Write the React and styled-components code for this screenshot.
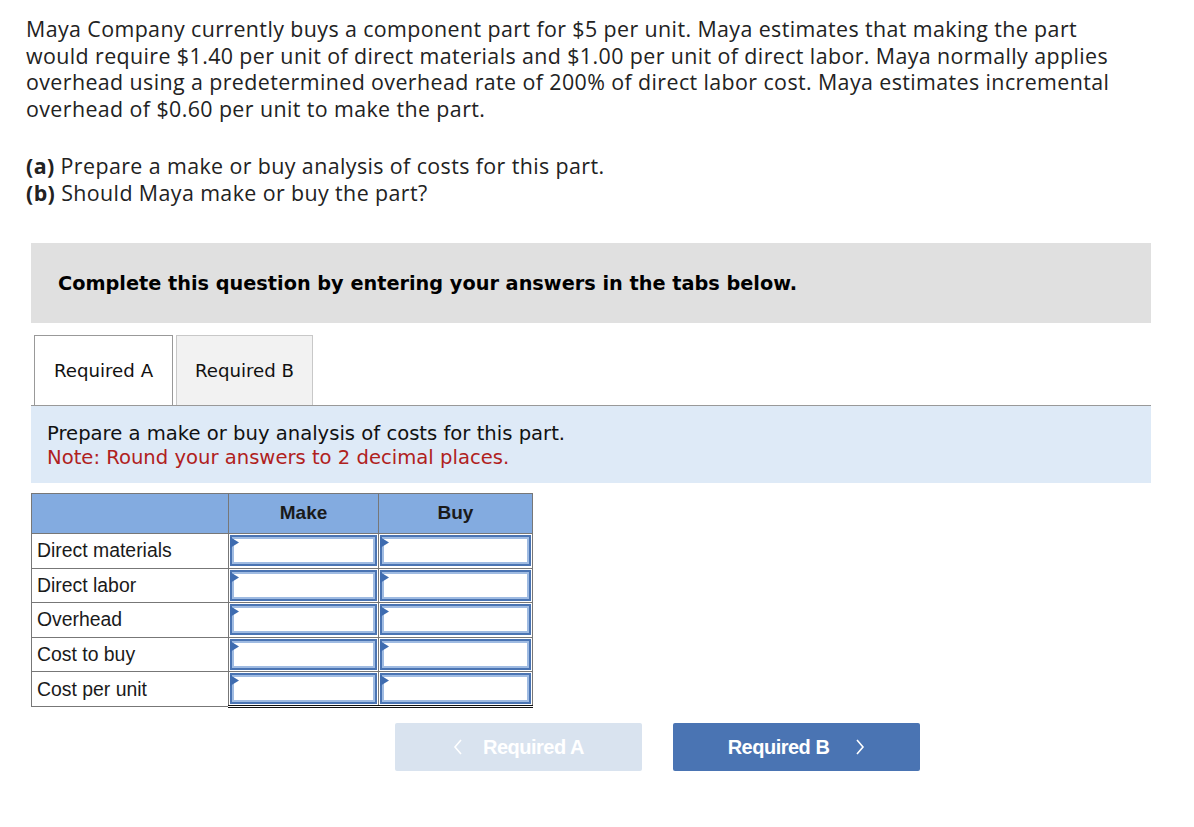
import React from 'react';
import styled, { createGlobalStyle } from 'styled-components';

const GlobalStyle = createGlobalStyle`
  body {
    margin: 0;
    background: #fff;
    color: #222;
  }
`;

const Page = styled.div`
  padding: 16px 43px 40px 26px;
  width: 1194px;
  box-sizing: border-box;
`;

const Problem = styled.p`
  font-family: "Open Sans", sans-serif;
  font-size: 21.4px;
  letter-spacing: 0.4px;
  line-height: 26.5px;
  margin: 0 0 31px;
  color: #222;
  white-space: nowrap;
`;

const Parts = styled(Problem)`
  margin: 0 0 37px;
  b { font-weight: 700; }
`;

const Panel = styled.div`
  margin-left: 5px;
  width: 1120px;
`;

const Instruction = styled.div`
  background: #e0e0e0;
  height: 80px;
  display: flex;
  align-items: center;
  padding-left: 27px;
  font-family: "DejaVu Sans", Verdana, sans-serif;
  font-weight: 700;
  font-size: 19.3px;
  color: #000;
`;

const TabBar = styled.div`
  display: flex;
  gap: 3px;
  margin-top: 12px;
  padding-left: 3px;
  border-bottom: 1px solid #999;
`;

const Tab = styled.div`
  box-sizing: border-box;
  display: flex;
  align-items: center;
  justify-content: center;
  width: ${p => (p.active ? '139px' : '137px')};
  height: 70px;
  border: 1px solid ${p => (p.active ? '#999' : '#c8c8c8')};
  border-bottom: none;
  background: ${p => (p.active ? '#fff' : '#f2f2f2')};
  font-family: "DejaVu Sans", Verdana, sans-serif;
  font-size: 18.2px;
  color: #111;
`;

const Info = styled.div`
  background: #deeaf7;
  height: 77px;
  box-sizing: border-box;
  padding: 16px 16px 0;
  font-family: "DejaVu Sans", Verdana, sans-serif;
  font-size: 19.6px;
  line-height: 24px;
  color: #111;
`;

const Note = styled.div`
  color: #b0211d;
`;

const Table = styled.table`
  margin-top: 10px;
  border-collapse: collapse;
  font-family: "Liberation Sans", Arial, sans-serif;
  font-size: 19.4px;
  color: #1a1a1a;
`;

const HeadCell = styled.th`
  background: #83abe0;
  border: 1px solid #777;
  height: 40px;
  width: ${p => p.w}px;
  font-weight: 700;
  font-size: 19px;
  padding: 8px 0 0;
  vertical-align: top;
  box-sizing: border-box;
`;

const LabelCell = styled.td`
  border: 1px solid #777;
  height: 34.5px;
  padding: 0 5px;
  box-sizing: border-box;
`;

const InputCell = styled.td`
  border: 1px solid #777;
  border-bottom: ${p => (p.last ? '3px double #111' : '1px solid #777')};
  padding: 1px;
  height: 34.5px;
  box-sizing: border-box;
`;

const FieldWrap = styled.div`
  position: relative;
`;

const Field = styled.div`
  height: 31px;
  box-sizing: border-box;
  border: 2px solid #4a74b3;
  box-shadow: inset 0 0 0 2px #9fbbe2;
  background: #fff;
`;

const Flag = styled.svg`
  display: block;
  position: absolute;
  left: 0;
  top: 2px;
  z-index: 2;
`;

const Nav = styled.div`
  display: flex;
  gap: 31px;
  margin-top: 15px;
  padding-left: 364px;
`;

const NavButton = styled.div`
  width: 247px;
  height: 48px;
  border-radius: 2px;
  display: flex;
  align-items: center;
  justify-content: center;
  gap: ${p => (p.disabled ? '20px' : '26px')};
  font-family: "Liberation Sans", Arial, sans-serif;
  font-weight: 700;
  font-size: 20px;
  letter-spacing: -0.5px;
  color: #fff;
  background: ${p => (p.disabled ? '#d9e3ef' : '#4a74b3')};
`;

const Chevron = ({ dir }) => (
  <svg width="10" height="16" viewBox="0 0 10 16">
    <path
      d={dir === 'left' ? 'M8 1 L2 8 L8 15' : 'M2 1 L8 8 L2 15'}
      fill="none"
      stroke="#fff"
      strokeWidth="1.6"
    />
  </svg>
);

const rows = ['Direct materials', 'Direct labor', 'Overhead', 'Cost to buy', 'Cost per unit'];

const Input = ({ last }) => (
  <InputCell last={last}>
    <FieldWrap>
      <Flag width="9" height="11" viewBox="0 0 9 11">
        <path d="M0 0 L9 5.5 L0 11 Z" fill="#3f6cb0" />
      </Flag>
      <Field />
    </FieldWrap>
  </InputCell>
);

export default function App() {
  return (
    <Page>
      <GlobalStyle />
      <Problem>
        Maya Company currently buys a component part for $5 per unit. Maya estimates that making the part
        <br />
        would require $1.40 per unit of direct materials and $1.00 per unit of direct labor. Maya normally applies
        <br />
        overhead using a predetermined overhead rate of 200% of direct labor cost. Maya estimates incremental
        <br />
        overhead of $0.60 per unit to make the part.
      </Problem>
      <Parts>
        <b>(a)</b> Prepare a make or buy analysis of costs for this part.
        <br />
        <b>(b)</b> Should Maya make or buy the part?
      </Parts>
      <Panel>
        <Instruction>Complete this question by entering your answers in the tabs below.</Instruction>
        <TabBar>
          <Tab active>Required A</Tab>
          <Tab>Required B</Tab>
        </TabBar>
        <Info>
          Prepare a make or buy analysis of costs for this part.
          <Note>Note: Round your answers to 2 decimal places.</Note>
        </Info>
        <Table>
          <thead>
            <tr>
              <HeadCell w={197} />
              <HeadCell w={150}>Make</HeadCell>
              <HeadCell w={154}>Buy</HeadCell>
            </tr>
          </thead>
          <tbody>
            {rows.map((r, i) => (
              <tr key={r}>
                <LabelCell>{r}</LabelCell>
                <Input last={i === rows.length - 1} />
                <Input last={i === rows.length - 1} />
              </tr>
            ))}
          </tbody>
        </Table>
        <Nav>
          <NavButton disabled>
            <Chevron dir="left" />
            <span>Required A</span>
          </NavButton>
          <NavButton>
            <span>Required B</span>
            <Chevron dir="right" />
          </NavButton>
        </Nav>
      </Panel>
    </Page>
  );
}
